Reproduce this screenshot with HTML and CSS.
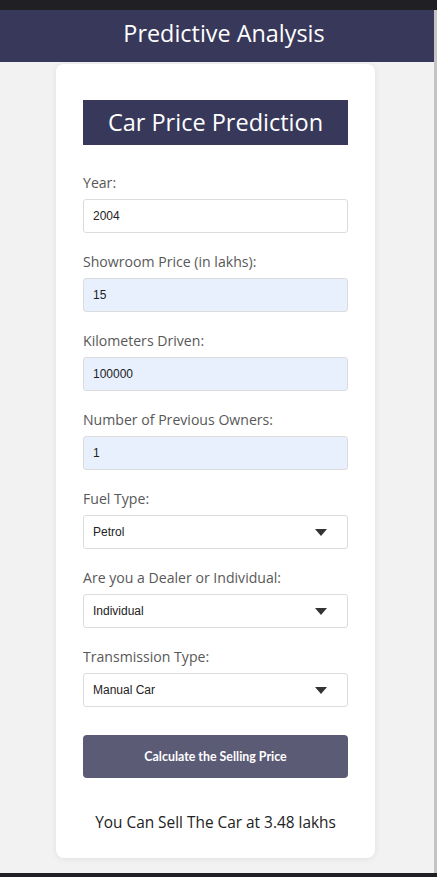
FILE: index.html
```html
<!DOCTYPE html>
<html lang="en">
<head>
<meta charset="utf-8">
<title>Predictive Analysis</title>
<link rel="stylesheet" href="styles.css">
</head>
<body>
<div class="screen">
  <div class="topbar"></div>
  <div class="middle">
    <div class="page">
      <header class="header"><h1 class="header-title">Predictive Analysis</h1></header>
      <main class="content">
        <form class="card">
          <h2 class="card-title">Car Price Prediction</h2>
          <div class="field">
            <label class="label">Year:</label>
            <div class="input">2004</div>
          </div>
          <div class="field">
            <label class="label">Showroom Price (in lakhs):</label>
            <div class="input filled">15</div>
          </div>
          <div class="field">
            <label class="label">Kilometers Driven:</label>
            <div class="input filled">100000</div>
          </div>
          <div class="field">
            <label class="label">Number of Previous Owners:</label>
            <div class="input filled">1</div>
          </div>
          <div class="field">
            <label class="label">Fuel Type:</label>
            <div class="input select"><span>Petrol</span><span class="caret"></span></div>
          </div>
          <div class="field">
            <label class="label">Are you a Dealer or Individual:</label>
            <div class="input select"><span>Individual</span><span class="caret"></span></div>
          </div>
          <div class="field">
            <label class="label">Transmission Type:</label>
            <div class="input select"><span>Manual Car</span><span class="caret"></span></div>
          </div>
          <div class="button">Calculate the Selling Price</div>
          <p class="result">You Can Sell The Car at 3.48 lakhs</p>
        </form>
      </main>
    </div>
    <div class="scrollstrip"></div>
  </div>
  <div class="bottombar"></div>
</div>
</body>
</html>
```

FILE: styles.css
```css
* { box-sizing: border-box; }
html, body { margin: 0; padding: 0; }
body {
  background: #f2f2f2;
  font-family: "Open Sans", sans-serif;
}
.screen {
  height: 877px;
  display: flex;
  flex-direction: column;
  overflow: hidden;
}
.topbar {
  height: 10px;
  background: #202024;
  flex: none;
}
.middle {
  flex: 1;
  display: flex;
  min-height: 0;
}
.page {
  flex: 1;
  display: flex;
  flex-direction: column;
  background: #f2f2f2;
}
.scrollstrip {
  width: 3px;
  background: #c4c4c4;
}
.bottombar {
  height: 4px;
  background: #202024;
  flex: none;
}
.header {
  height: 52px;
  padding: 0 0 7px 14px;
  background: #38385a;
  display: flex;
  align-items: center;
  justify-content: center;
  flex: none;
}
.header-title {
  margin: 0;
  color: #ffffff;
  font-family: "Open Sans", sans-serif;
  font-weight: 400;
  font-size: 23.4px;
}
.content {
  padding: 2px 0 0 56px;
}
.card {
  width: 319px;
  height: 794px;
  background: #ffffff;
  border-radius: 8px;
  box-shadow: 0 1px 6px rgba(0,0,0,0.08);
  padding: 36px 27px 0 27px;
  display: flex;
  flex-direction: column;
}
.card-title {
  margin: 0 0 28px 0;
  height: 45px;
  padding-bottom: 2px;
  background: #38385a;
  color: #ffffff;
  font-family: "Open Sans", sans-serif;
  font-weight: 400;
  font-size: 23.5px;
  display: flex;
  align-items: center;
  justify-content: center;
}
.field {
  display: flex;
  flex-direction: column;
  margin-bottom: 19px;
}
.label {
  font-family: "Open Sans", sans-serif;
  font-size: 14.1px;
  line-height: 20px;
  height: 20px;
  color: #585858;
  margin-bottom: 6px;
}
.input {
  height: 34px;
  border: 1px solid #dcdcdc;
  border-radius: 3px;
  background: #ffffff;
  font-family: "Liberation Sans", Arial, sans-serif;
  font-size: 12px;
  color: #222222;
  padding: 0 9px;
  display: flex;
  align-items: center;
}
.input.filled {
  background: #e8f0fe;
}
.select {
  justify-content: space-between;
  padding-right: 20px;
}
.caret {
  width: 0;
  height: 0;
  border-left: 6px solid transparent;
  border-right: 6px solid transparent;
  border-top: 7px solid #333333;
}
.button {
  margin-top: 9px;
  height: 43px;
  background: #5b5b76;
  border-radius: 4px;
  color: #ffffff;
  font-family: "Lato", sans-serif;
  font-weight: 700;
  font-size: 12.4px;
  display: flex;
  align-items: center;
  justify-content: center;
}
.result {
  margin: 34px 0 0 0;
  text-align: center;
  font-family: "Open Sans", sans-serif;
  font-size: 15.4px;
  color: #222222;
}
```
